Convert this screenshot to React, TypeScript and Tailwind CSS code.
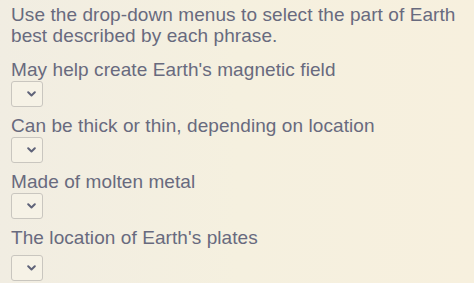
const items = [
  "May help create Earth's magnetic field",
  'Can be thick or thin, depending on location',
  'Made of molten metal',
  "The location of Earth's plates",
];

function Dropdown({ className = '' }: { className?: string }) {
  return (
    <div
      className={`flex h-[26px] w-[32px] items-center justify-end rounded-[3px] border-[1.5px] border-[#c9c6bf] bg-[#f6f2e6] pr-[6px] ${className}`}
    >
      <svg width="9" height="6" viewBox="0 0 9 6" fill="none">
        <path d="M1.2 1.3l3.3 3.2 3.3-3.2" stroke="#5f6379" strokeWidth="2" strokeLinecap="round" strokeLinejoin="round" />
      </svg>
    </div>
  );
}

export default function App() {
  return (
    <div
      className="h-[283px] w-[474px] overflow-hidden bg-gradient-to-r from-[#f1ede2] via-[#f5f0df] to-[#f7f0de] pl-[11px] pt-1 text-[19px] tracking-[0.08px] text-[#686a7e]"
      style={{ fontFamily: '"Liberation Sans", Arial, sans-serif' }}
    >
      <p className="leading-[21px]">
        Use the drop-down menus to select the part of Earth
        <br />
        best described by each phrase.
      </p>
      <div className="mt-[14px] flex flex-col gap-[9px]">
        {items.map((label, i) => (
          <div key={label}>
            <div className="leading-[20px]">{label}</div>
            <Dropdown className={i === 3 ? 'mt-[7px]' : 'mt-[1px]'} />
          </div>
        ))}
      </div>
    </div>
  );
}
